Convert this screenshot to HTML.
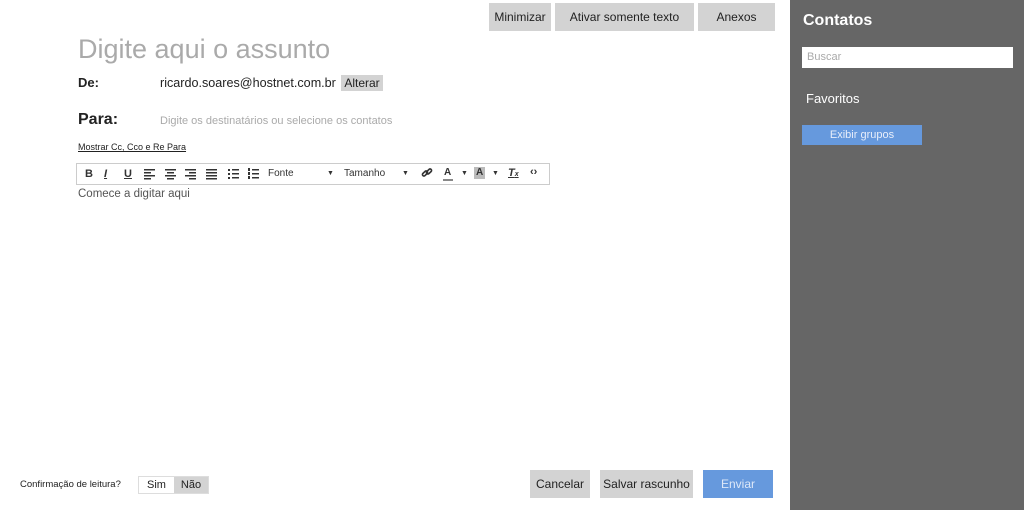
<!DOCTYPE html>
<html><head><meta charset="utf-8"><style>
*{margin:0;padding:0;box-sizing:border-box}
body{width:1024px;height:510px;overflow:hidden;background:#fff;font-family:"Liberation Sans",sans-serif;position:relative;color:#222}
.a{position:absolute;white-space:nowrap}
.btn{position:absolute;background:#d3d3d3;color:#222;font-size:12px;text-align:center}
.side{position:absolute;left:790px;top:0;width:234px;height:510px;background:#666}
.t{position:absolute;top:168px;font-size:11px;color:#333}
.line{position:absolute;height:1px;background:#333}
</style></head><body>
<div class="btn" style="left:489px;top:3px;width:62px;height:28px;line-height:28px">Minimizar</div>
<div class="btn" style="left:555px;top:3px;width:139px;height:28px;line-height:28px">Ativar somente texto</div>
<div class="btn" style="left:698px;top:3px;width:77px;height:28px;line-height:28px">Anexos</div>

<div class="a" style="left:78px;top:34px;font-size:27px;color:#aaa">Digite aqui o assunto</div>
<div class="a" style="left:78px;top:75px;font-size:13px;font-weight:bold">De:</div>
<div class="a" style="left:160px;top:76px;font-size:12.6px">ricardo.soares@hostnet.com.br</div>
<div class="btn" style="left:341px;top:75px;width:42px;height:16px;line-height:16px">Alterar</div>
<div class="a" style="left:78px;top:111px;font-size:16px;font-weight:bold">Para:</div>
<div class="a" style="left:160px;top:115px;font-size:11px;color:#aaa">Digite os destinatários ou selecione os contatos</div>
<div class="a" style="left:78px;top:142px;font-size:9px;text-decoration:underline">Mostrar Cc, Cco e Re Para</div>

<div style="position:absolute;left:76px;top:163px;width:474px;height:22px;border:1px solid #ccc"></div>
<div class="t" style="left:85px;font-weight:bold">B</div>
<div class="t" style="left:104px;font-style:italic;font-weight:bold;text-decoration:underline">I</div>
<div class="t" style="left:124px;font-weight:bold;text-decoration:underline">U</div>
<svg class="a" style="left:144px;top:168px" width="120" height="12" fill="#333">
<rect x="0" y="1" width="11" height="1.5"/><rect x="0" y="4" width="7" height="1.5"/><rect x="0" y="7" width="11" height="1.5"/><rect x="0" y="10" width="7" height="1.5"/>
<rect x="21" y="1" width="11" height="1.5"/><rect x="23" y="4" width="7" height="1.5"/><rect x="21" y="7" width="11" height="1.5"/><rect x="23" y="10" width="7" height="1.5"/>
<rect x="41" y="1" width="11" height="1.5"/><rect x="45" y="4" width="7" height="1.5"/><rect x="41" y="7" width="11" height="1.5"/><rect x="45" y="10" width="7" height="1.5"/>
<rect x="62" y="1" width="11" height="1.5"/><rect x="62" y="4" width="11" height="1.5"/><rect x="62" y="7" width="11" height="1.5"/><rect x="62" y="10" width="11" height="1.5"/>
<rect x="84" y="1" width="2" height="2"/><rect x="88" y="1" width="7" height="1.5"/><rect x="84" y="5" width="2" height="2"/><rect x="88" y="5" width="7" height="1.5"/><rect x="84" y="9" width="2" height="2"/><rect x="88" y="9" width="7" height="1.5"/>
<rect x="104" y="0" width="2" height="3"/><rect x="108" y="1" width="7" height="1.5"/><rect x="104" y="4" width="2" height="3"/><rect x="108" y="5" width="7" height="1.5"/><rect x="104" y="8" width="2" height="3"/><rect x="108" y="9" width="7" height="1.5"/>
</svg>
<div class="t" style="left:268px;font-size:10px">Fonte</div>
<div class="t" style="left:327px;font-size:7px;top:170px">▼</div>
<div class="t" style="left:344px;font-size:10px">Tamanho</div>
<div class="t" style="left:402px;font-size:7px;top:170px">▼</div>
<svg class="a" style="left:421px;top:167px" width="12" height="12" fill="none" stroke="#333" stroke-width="1.6"><rect x="1" y="5" width="6" height="3" rx="1.5" transform="rotate(-45 4 6.5)"/><rect x="5" y="3" width="6" height="3" rx="1.5" transform="rotate(-45 8 4.5)"/></svg>
<div class="t" style="left:444px;font-weight:bold;font-size:10px;top:167px">A</div>
<div class="line" style="left:443px;top:179px;width:10px;background:#888;height:2px"></div>
<div class="t" style="left:461px;font-size:7px;top:170px">▼</div>
<div class="a" style="left:474px;top:167px;width:11px;height:12px;background:#bbb"></div>
<div class="t" style="left:476px;font-weight:bold;font-size:10px;top:167px">A</div>
<div class="t" style="left:492px;font-size:7px;top:170px">▼</div>
<div class="t" style="left:508px;font-weight:bold;font-style:italic;font-size:11px;text-decoration:underline;top:167px">T<span style="font-size:7px">x</span></div>
<div class="t" style="left:530px;font-size:11px;font-weight:bold;top:166px">‹›</div>
<div class="a" style="left:78px;top:188px;font-size:11.5px;color:#555">Comece a digitar aqui</div>

<div class="a" style="left:20px;top:479px;font-size:9.5px">Confirmação de leitura?</div>
<div class="a" style="left:138px;top:476px;width:71px;height:18px;border:1px solid #ddd;font-size:11px">
<span style="position:absolute;left:0;top:0;width:35px;height:16px;line-height:16px;text-align:center;background:#fff">Sim</span>
<span style="position:absolute;left:35px;top:0;width:34px;height:16px;line-height:16px;text-align:center;background:#d3d3d3">Não</span></div>
<div class="btn" style="left:530px;top:470px;width:60px;height:28px;line-height:28px">Cancelar</div>
<div class="btn" style="left:600px;top:470px;width:93px;height:28px;line-height:28px">Salvar rascunho</div>
<div class="btn" style="left:703px;top:470px;width:70px;height:28px;line-height:28px;background:#6699dd;color:#dde8f8">Enviar</div>

<div class="side">
<div class="a" style="left:13px;top:12px;font-size:16px;font-weight:bold;color:#fff">Contatos</div>
<div class="a" style="left:12px;top:47px;width:211px;height:21px;background:#fff;font-size:11px;color:#aaa;line-height:21px;padding-left:5px">Buscar</div>
<div class="a" style="left:16px;top:91px;font-size:13px;color:#fff">Favoritos</div>
<div class="a" style="left:12px;top:125px;width:120px;height:20px;background:#6699dd;color:#e8eefa;font-size:11px;line-height:20px;text-align:center">Exibir grupos</div>
</div>
</body></html>
